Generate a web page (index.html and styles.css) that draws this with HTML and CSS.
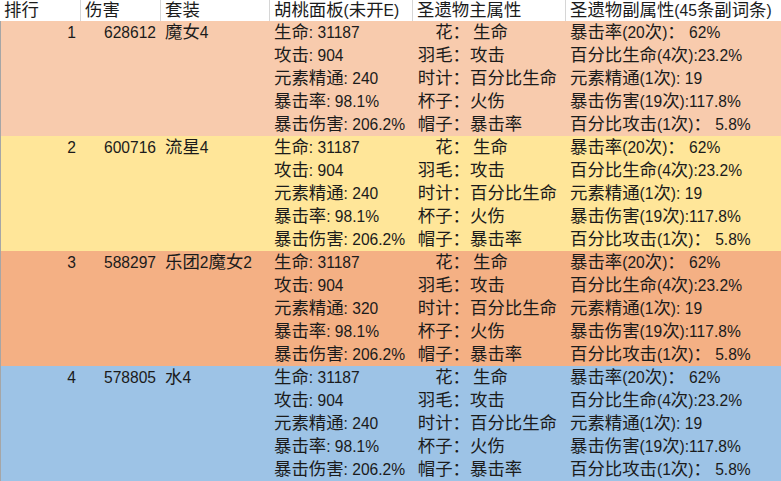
FILE: index.html
```html
<!DOCTYPE html>
<html lang="zh">
<head>
<meta charset="utf-8">
<title>胡桃圣遗物</title>
<link rel="stylesheet" href="styles.css">
</head>
<body>
<div class="sheet">
  <div class="row head">
    <div class="c c1"><span class="z">排行</span></div>
    <div class="c c2"><span class="z">伤害</span></div>
    <div class="c c3"><span class="z">套装</span></div>
    <div class="c c4"><span class="z">胡桃面板</span>(<span class="z">未开</span>E)</div>
    <div class="c c5"><span class="z">圣遗物主属性</span></div>
    <div class="c c6"><span class="z">圣遗物副属性</span>(45<span class="z">条副词条</span>)</div>
  </div>

  <div class="row data r1">
    <div class="c c1 num">1</div>
    <div class="c c2 num">628612</div>
    <div class="c c3"><span class="z">魔女</span>4</div>
    <div class="c c4"><div><span class="z">生命</span>: 31187</div><div><span class="z">攻击</span>: 904</div><div><span class="z">元素精通</span>: 240</div><div><span class="z">暴击率</span>: 98.1%</div><div><span class="z">暴击伤害</span>: 206.2%</div></div>
    <div class="c c5"><div><span class="k z">花：</span><span class="v sp z">生命</span></div><div><span class="k z">羽毛：</span><span class="v z">攻击</span></div><div><span class="k z">时计：</span><span class="v z">百分比生命</span></div><div><span class="k z">杯子：</span><span class="v z">火伤</span></div><div><span class="k z">帽子：</span><span class="v z">暴击率</span></div></div>
    <div class="c c6"><div><span class="z">暴击率</span>(20<span class="z">次</span>)<span class="z">：</span>&nbsp;62%</div><div><span class="z">百分比生命</span>(4<span class="z">次</span>):23.2%</div><div><span class="z">元素精通</span>(1<span class="z">次</span>): 19</div><div><span class="z">暴击伤害</span>(19<span class="z">次</span>):117.8%</div><div><span class="z">百分比攻击</span>(1<span class="z">次</span>)<span class="z">：</span>&nbsp;5.8%</div></div>
  </div>

  <div class="row data r2">
    <div class="c c1 num">2</div>
    <div class="c c2 num">600716</div>
    <div class="c c3"><span class="z">流星</span>4</div>
    <div class="c c4"><div><span class="z">生命</span>: 31187</div><div><span class="z">攻击</span>: 904</div><div><span class="z">元素精通</span>: 240</div><div><span class="z">暴击率</span>: 98.1%</div><div><span class="z">暴击伤害</span>: 206.2%</div></div>
    <div class="c c5"><div><span class="k z">花：</span><span class="v sp z">生命</span></div><div><span class="k z">羽毛：</span><span class="v z">攻击</span></div><div><span class="k z">时计：</span><span class="v z">百分比生命</span></div><div><span class="k z">杯子：</span><span class="v z">火伤</span></div><div><span class="k z">帽子：</span><span class="v z">暴击率</span></div></div>
    <div class="c c6"><div><span class="z">暴击率</span>(20<span class="z">次</span>)<span class="z">：</span>&nbsp;62%</div><div><span class="z">百分比生命</span>(4<span class="z">次</span>):23.2%</div><div><span class="z">元素精通</span>(1<span class="z">次</span>): 19</div><div><span class="z">暴击伤害</span>(19<span class="z">次</span>):117.8%</div><div><span class="z">百分比攻击</span>(1<span class="z">次</span>)<span class="z">：</span>&nbsp;5.8%</div></div>
  </div>

  <div class="row data r3">
    <div class="c c1 num">3</div>
    <div class="c c2 num">588297</div>
    <div class="c c3"><span class="z">乐团</span>2<span class="z">魔女</span>2</div>
    <div class="c c4"><div><span class="z">生命</span>: 31187</div><div><span class="z">攻击</span>: 904</div><div><span class="z">元素精通</span>: 320</div><div><span class="z">暴击率</span>: 98.1%</div><div><span class="z">暴击伤害</span>: 206.2%</div></div>
    <div class="c c5"><div><span class="k z">花：</span><span class="v sp z">生命</span></div><div><span class="k z">羽毛：</span><span class="v z">攻击</span></div><div><span class="k z">时计：</span><span class="v z">百分比生命</span></div><div><span class="k z">杯子：</span><span class="v z">火伤</span></div><div><span class="k z">帽子：</span><span class="v z">暴击率</span></div></div>
    <div class="c c6"><div><span class="z">暴击率</span>(20<span class="z">次</span>)<span class="z">：</span>&nbsp;62%</div><div><span class="z">百分比生命</span>(4<span class="z">次</span>):23.2%</div><div><span class="z">元素精通</span>(1<span class="z">次</span>): 19</div><div><span class="z">暴击伤害</span>(19<span class="z">次</span>):117.8%</div><div><span class="z">百分比攻击</span>(1<span class="z">次</span>)<span class="z">：</span>&nbsp;5.8%</div></div>
  </div>

  <div class="row data r4">
    <div class="c c1 num">4</div>
    <div class="c c2 num">578805</div>
    <div class="c c3"><span class="z">水</span>4</div>
    <div class="c c4"><div><span class="z">生命</span>: 31187</div><div><span class="z">攻击</span>: 904</div><div><span class="z">元素精通</span>: 240</div><div><span class="z">暴击率</span>: 98.1%</div><div><span class="z">暴击伤害</span>: 206.2%</div></div>
    <div class="c c5"><div><span class="k z">花：</span><span class="v sp z">生命</span></div><div><span class="k z">羽毛：</span><span class="v z">攻击</span></div><div><span class="k z">时计：</span><span class="v z">百分比生命</span></div><div><span class="k z">杯子：</span><span class="v z">火伤</span></div><div><span class="k z">帽子：</span><span class="v z">暴击率</span></div></div>
    <div class="c c6"><div><span class="z">暴击率</span>(20<span class="z">次</span>)<span class="z">：</span>&nbsp;62%</div><div><span class="z">百分比生命</span>(4<span class="z">次</span>):23.2%</div><div><span class="z">元素精通</span>(1<span class="z">次</span>): 19</div><div><span class="z">暴击伤害</span>(19<span class="z">次</span>):117.8%</div><div><span class="z">百分比攻击</span>(1<span class="z">次</span>)<span class="z">：</span>&nbsp;5.8%</div></div>
  </div>
</div>
</body>
</html>
```

FILE: styles.css
```css
html, body {
  margin: 0;
  padding: 0;
  background: #ffffff;
}

.sheet {
  width: 781px;
  height: 481px;
  overflow: hidden;
  font-family: "Liberation Sans", "Noto Sans CJK SC", sans-serif;
  font-size: 15.6px;
  color: #1b1b1b;
}

.z {
  font-size: 17.4px;
}

.row {
  display: grid;
  grid-template-columns: 80px 80px 109px 143px 153px 1fr;
}

.head {
  height: 21px;
  line-height: 21px;
  background: #ffffff;
}

.head .c {
  padding-left: 4px;
  white-space: nowrap;
  overflow: hidden;
}

.head .c + .c {
  border-left: 1px solid #d6d6d6;
}

.data {
  height: 115px;
  line-height: 23px;
  box-shadow: inset 1px 0 0 #a6a6a6;
}

.data .c {
  white-space: nowrap;
  overflow: hidden;
}

.data .num {
  text-align: right;
  padding-right: 4px;
}

.data .c3,
.data .c4,
.data .c6 {
  padding-left: 5px;
}

.k {
  display: inline-block;
  width: 58px;
  text-align: right;
}

.v.sp {
  margin-left: 3px;
}

.r1 { background: #f8cbad; }
.r2 { background: #ffe699; }
.r3 { background: #f4b084; }
.r4 { background: #9dc3e6; }
```
